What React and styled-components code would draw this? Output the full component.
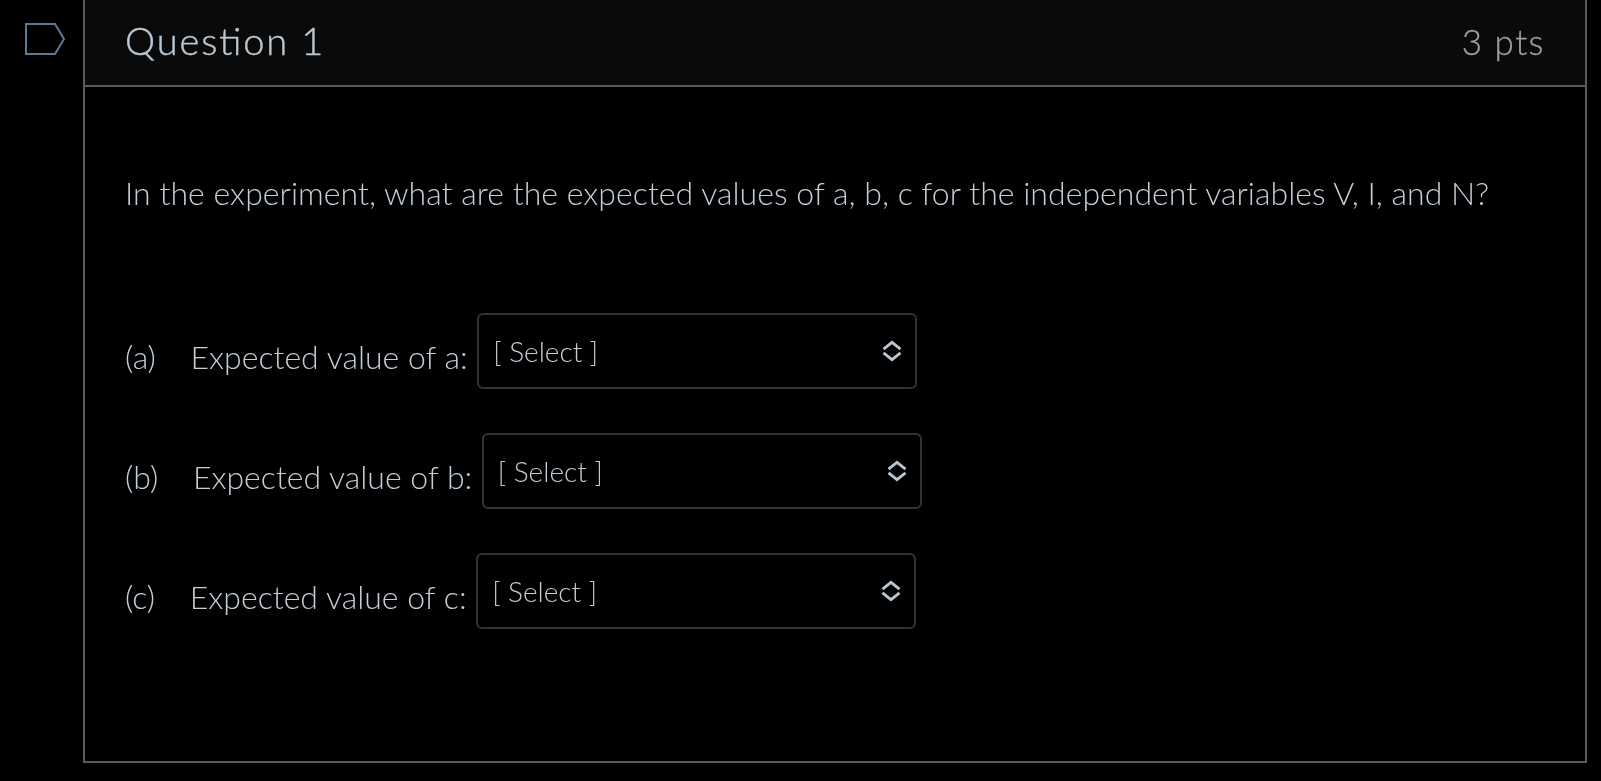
import React, { useState } from 'react'
import styled, { createGlobalStyle } from 'styled-components'


const questions = [
  { id: "a", label: "Expected value of a:" },
  { id: "b", label: "Expected value of b:" },
  { id: "c", label: "Expected value of c:" },
]

const App = () => {
  const [flagged, setFlagged] = useState(false)
  return (
    <>
      <GlobalStyle />
      <PageStyle>
        <FlagButton title="Flag question" onClick={() => setFlagged(!flagged)}>
          <FlagIcon flagged={flagged} />
        </FlagButton>
        <QuestionCard>
          <HeaderStyle>
            <TitleStyle>Question 1</TitleStyle>
            <PointsStyle>3 pts</PointsStyle>
          </HeaderStyle>
          <BodyStyle>
            <PromptStyle>
              In the experiment, what are the expected values of a, b, c for the independent variables V, I, and N?
            </PromptStyle>
            <AnswerList>
              {questions.map(({ id, label }) => (
                <AnswerRow key={id}>
                  <LetterStyle>({id})</LetterStyle>
                  <LabelStyle>{label}</LabelStyle>
                  <SelectButton>
                    [ Select ]
                    <ChevronsIcon />
                  </SelectButton>
                </AnswerRow>
              ))}
            </AnswerList>
          </BodyStyle>
        </QuestionCard>
      </PageStyle>
    </>
  )
}

const FlagIcon = ({ flagged }) => (
  <svg width="40" height="32" viewBox="0 0 40 32">
    <path d="M1 1H30L39 16L30 31H1Z" fill={flagged ? "#5a7b91" : "none"} stroke="#5a7b91" strokeWidth="2" />
  </svg>
)

const ChevronsIcon = () => (
  <svg width="20" height="22" viewBox="0 0 20 22" fill="none" stroke="#bcc6d0" strokeWidth="2.8">
    <path d="M1.5 9.2L10 2.4L18.5 9.2" />
    <path d="M1.5 12.8L10 19.6L18.5 12.8" />
  </svg>
)

const GlobalStyle = createGlobalStyle`
  body {
    margin: 0;
    background-color: #000;
    color: #c3ced8;
    font-family: Lato, "Liberation Sans", sans-serif;
    font-weight: 300;
  }
  * {
    box-sizing: border-box;
  }
`
const PageStyle = styled.div`
  display: flex;
  align-items: flex-start;
  height: 781px;
  will-change: transform;
`
const FlagButton = styled.button`
  display: flex;
  width: 83px;
  padding: 23px 0 0 25px;
  border: none;
  background-color: transparent;
  cursor: pointer;
`
const QuestionCard = styled.div`
  width: 1504px;
  height: 763px;
  border: 2px solid #5a5a5a;
  border-top: none;
`
const HeaderStyle = styled.div`
  display: flex;
  align-items: baseline;
  justify-content: space-between;
  height: 87px;
  padding: 16px 40px 0 40px;
  border-bottom: 2px solid #5a5a5a;
  background-color: #0a0a0a;
`
const TitleStyle = styled.div`
  font-size: 38px;
  line-height: 48px;
  letter-spacing: 1.9px;
  font-feature-settings: "liga";
  color: #bcc8d2;
  -webkit-text-stroke: 0.4px #bcc8d2;
`
const PointsStyle = styled.div`
  font-size: 35px;
  letter-spacing: 1.5px;
  color: #a0a0a0;
  -webkit-text-stroke: 0.3px #a0a0a0;
`
const BodyStyle = styled.div`
  padding: 83px 40px 0;
`
const PromptStyle = styled.div`
  font-size: 32px;
  line-height: 46px;
  letter-spacing: 0.035px;
  white-space: nowrap;
`
const AnswerList = styled.div`
  display: flex;
  flex-direction: column;
  gap: 44px;
  padding-top: 97px;
`
const AnswerRow = styled.div`
  display: flex;
  align-items: center;
  height: 76px;
  font-size: 32px;
  line-height: 46px;
`
const LetterStyle = styled.div`
  margin-right: 34.7px;
  padding-top: 12px;
`
const LabelStyle = styled.div`
  margin-right: 9.6px;
  padding-top: 12px;
`
const SelectButton = styled.button`
  display: flex;
  align-items: center;
  justify-content: space-between;
  width: 440px;
  height: 76px;
  padding: 0 13px 0 14px;
  border: 2px solid #333;
  border-radius: 6px;
  background-color: transparent;
  color: #c3ced8;
  font-family: inherit;
  font-size: 28px;
  font-weight: 300;
  cursor: pointer;
`
export default App
